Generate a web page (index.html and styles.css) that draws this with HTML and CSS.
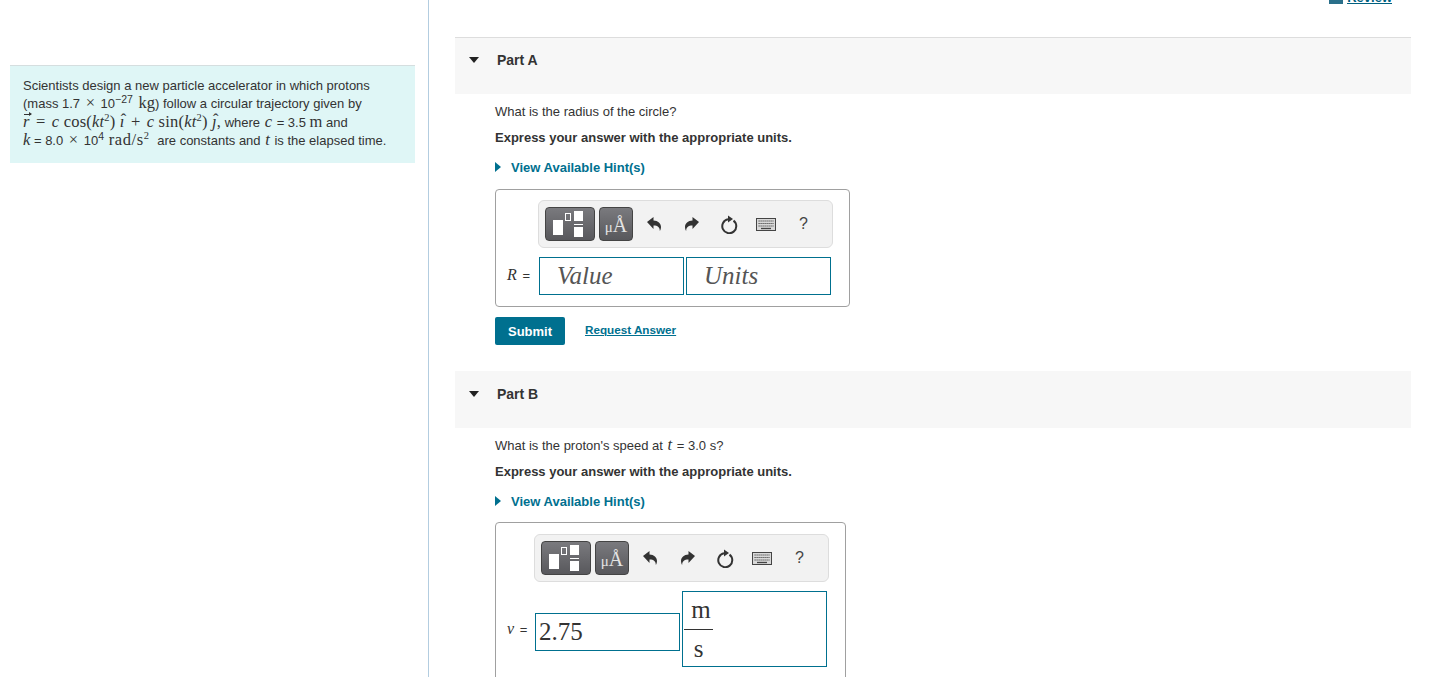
FILE: index.html
```html
<!DOCTYPE html>
<html lang="en">
<head>
    <meta charset="UTF-8" />
    <title>Item</title>
    <link rel="stylesheet" href="styles.css">
</head>
<body>
    <svg class="icon_defs" width="0" height="0">
        <symbol id="undo" viewBox="0 0 16 16"><path d="M1 6 7.500 1v3.500c4.500 0 7.500 3 7.500 6.500 0 1.500-.5 3-1.200 4 .2-3.500-2-5.500-6.300-5.500V13z"/></symbol>
        <symbol id="reset" viewBox="0 0 18 20"><path d="M8 5.300A7 7 0 1 0 13.500 6.600" fill="none" stroke="#333" stroke-width="2"/><path d="M8 1.500v7l5-3.500z"/></symbol>
        <symbol id="keyboard" viewBox="0 0 20 13"><rect x=".5" y=".5" width="19" height="12" fill="#d8d8d8" stroke="#444"/><path d="M2.500 3h15M2.500 5.500h15M2.500 8h15" stroke="#444" stroke-width="1.200" stroke-dasharray="1.200 .8"/><path d="M5 10.500h10" stroke="#444" stroke-width="1.300"/></symbol>
    </svg>

    <aside class="side">
        <div class="intro">
            <p>Scientists design a new particle accelerator in which protons</p>
            <p>(mass 1.7 <span class="times">×</span> 10<sup class="sup_big">−27</sup> <span class="m kg">kg</span>) follow a circular trajectory given by</p>
            <p><span class="m eq"><i class="vec">r</i> <span class="rel">=</span> <i>c</i> cos(<i>kt</i><sup>2</sup>) <i class="hat">ı</i> <span class="rel">+</span> <i>c</i> sin(<i>kt</i><sup>2</sup>) <i class="hat">ȷ</i>,</span> where <i class="m tight">c</i> = 3.5 <span class="m">m</span> and</p>
            <p><i class="m">k</i> = 8.0 <span class="times">×</span> 10<sup class="sup_big">4</sup> <span class="m rad">rad/s<sup>2</sup></span> are constants and <i class="m tight">t</i> is the elapsed time.</p>
        </div>
    </aside>

    <main class="content">
        <div class="review_row">
            <a href="#" class="review_link"><span class="review_icon"></span><span class="review_text">Review</span></a>
        </div>

        <section class="part">
            <div class="part_head"><span class="caret"></span><h3>Part A</h3></div>
            <div class="part_body">
                <p class="question">What is the radius of the circle?</p>
                <p class="express">Express your answer with the appropriate units.</p>
                <a href="#" class="hint"><span class="hint_arrow"></span>View Available Hint(s)</a>

                <div class="answer_box">
                    <div class="toolbar">
                        <button class="tool_btn tool_frac"><span class="b_sq"></span><span class="s_sq"></span><span class="frac"><span></span><span></span></span></button>
                        <button class="tool_btn tool_unit"><span class="mu">μ</span>Å</button>
                        <svg class="ic ic_undo"><use href="#undo"/></svg>
                        <svg class="ic ic_redo"><use href="#undo"/></svg>
                        <svg class="ic ic_reset"><use href="#reset"/></svg>
                        <svg class="ic ic_kb"><use href="#keyboard"/></svg>
                        <span class="ic_help">?</span>
                    </div>
                    <div class="input_row">
                        <span class="var"><i>R</i> =</span>
                        <div class="field placeholder">Value</div>
                        <div class="field placeholder">Units</div>
                    </div>
                </div>

                <div class="actions">
                    <button class="submit">Submit</button>
                    <a href="#" class="request">Request Answer</a>
                </div>
            </div>
        </section>

        <section class="part part_b">
            <div class="part_head"><span class="caret"></span><h3>Part B</h3></div>
            <div class="part_body">
                <p class="question">What is the proton's speed at <i class="m tight">t</i> = 3.0 s?</p>
                <p class="express">Express your answer with the appropriate units.</p>
                <a href="#" class="hint"><span class="hint_arrow"></span>View Available Hint(s)</a>

                <div class="answer_box box_b">
                    <div class="toolbar">
                        <button class="tool_btn tool_frac"><span class="b_sq"></span><span class="s_sq"></span><span class="frac"><span></span><span></span></span></button>
                        <button class="tool_btn tool_unit"><span class="mu">μ</span>Å</button>
                        <svg class="ic ic_undo"><use href="#undo"/></svg>
                        <svg class="ic ic_redo"><use href="#undo"/></svg>
                        <svg class="ic ic_reset"><use href="#reset"/></svg>
                        <svg class="ic ic_kb"><use href="#keyboard"/></svg>
                        <span class="ic_help">?</span>
                    </div>
                    <div class="input_row">
                        <span class="var"><i>v</i> =</span>
                        <div class="field filled">2.75</div>
                        <div class="field units_frac">
                            <div class="fraction"><span class="num">m</span><span class="den">s</span></div>
                        </div>
                    </div>
                </div>
            </div>
        </section>
    </main>
</body>
</html>
```

FILE: styles.css
```css
/* Resetting default styling */
* {
    margin: 0;
    padding: 0;
    box-sizing: border-box;
    font-family: "Liberation Sans", Arial, sans-serif;
}

html, body {
    height: 677px;
    overflow: hidden;
}

body {
    display: flex;
    background: #ffffff;
    color: #333333;
    font-size: 13px;
}

.icon_defs {
    position: absolute;
}

/* Left column */
.side {
    width: 429px;
    flex: none;
    padding: 65px 13px 0 10px;
    border-right: 1px solid #b3cde0;
}

.intro {
    height: 98px;
    padding: 11px 13px 0;
    background: #dff6f6;
    border-top: 1px solid #d5dedf;
    white-space: nowrap;
}

.intro p {
    height: 18.300px;
    line-height: 18.300px;
}

/* Math text */
.m, .m i, .m span, .m sup, .var i, .part i, .times {
    font-family: "Liberation Serif", serif;
}

.m {
    font-size: 16.500px;
    line-height: 0;
}

.eq {
    letter-spacing: .2px;
}

.rad {
    letter-spacing: .6px;
    margin: 0 4px 0 1px;
}

.rel {
    margin: 0 2px;
}

.times {
    font-size: 16.500px;
    line-height: 0;
    margin: 0 2px;
}

.tight {
    margin: 0 1px;
}

sup {
    font-size: 10.500px;
    line-height: 0;
}

.kg {
    margin-left: 2px;
}

.vec, .hat {
    position: relative;
}

.vec::before {
    content: '';
    position: absolute;
    left: 1px;
    top: 2px;
    width: 7px;
    height: 1px;
    background: #333333;
}

.vec::after {
    content: '';
    position: absolute;
    left: 6px;
    top: 0;
    border-left: 3px solid #333333;
    border-top: 2.500px solid transparent;
    border-bottom: 2.500px solid transparent;
}

.hat::before {
    content: 'ˆ';
    position: absolute;
    left: 1px;
    top: 0;
    font-style: normal;
    line-height: 16px;
}

/* Right column */
.content {
    width: 956px;
    flex: none;
    margin-left: 26px;
}

.review_row {
    height: 37px;
    margin-top: -8px;
    margin-bottom: 8px;
    padding-right: 19px;
    text-align: right;
}

.review_link {
    display: inline-flex;
    align-items: flex-end;
    gap: 4px;
    height: 11px;
    color: #00607f;
    font-size: 13px;
    font-weight: bold;
}

.review_icon {
    width: 14px;
    height: 5px;
    background: #2a6f8a;
}

.review_text {
    line-height: 11px;
    border-bottom: 1px solid #00607f;
}

.part_b {
    margin-top: 26px;
}

.part_head {
    height: 57px;
    display: flex;
    padding: 15px 0 0 14px;
    background: #f7f7f7;
}

.part:first-of-type .part_head {
    padding-top: 14px;
    border-top: 1px solid #dddddd;
}

.part_head h3 {
    font-size: 14px;
    line-height: 16px;
    margin-left: 18px;
    color: #333333;
}

.caret {
    width: 0;
    height: 0;
    margin-top: 5px;
    border-left: 5.500px solid transparent;
    border-right: 5.500px solid transparent;
    border-top: 6px solid #222222;
}

.part_body {
    padding: 10px 0 0 40px;
}

.question {
    line-height: 16px;
}

.express {
    margin-top: 10px;
    line-height: 16px;
    font-weight: bold;
}

.hint {
    display: flex;
    align-items: center;
    margin-top: 13px;
    height: 16px;
    color: #00708f;
    font-weight: bold;
    text-decoration: none;
}

.hint_arrow {
    width: 0;
    height: 0;
    margin-right: 10px;
    border-top: 5px solid transparent;
    border-bottom: 5px solid transparent;
    border-left: 6px solid #00708f;
}

/* Answer box */
.answer_box {
    width: 355px;
    height: 118px;
    margin-top: 14px;
    padding: 10px 16px 0 11px;
    border: 1px solid #a0a0a0;
    border-radius: 4px;
}

.box_b {
    width: 351px;
    height: 170px;
    margin-top: 13px;
    padding-top: 11px;
}

.toolbar {
    width: 295px;
    height: 48px;
    margin-left: 31px;
    display: flex;
    align-items: center;
    padding-left: 6px;
    gap: 4px;
    background: #f2f2f2;
    border: 1px solid #dddddd;
    border-radius: 6px;
}

.box_b .toolbar {
    margin-left: 27px;
}

.tool_btn {
    height: 34px;
    border: 1px solid #444444;
    border-radius: 4px;
    background: linear-gradient(#7a7a7e, #58585c);
    flex: none;
}

.tool_frac {
    position: relative;
    width: 50px;
}

.b_sq {
    position: absolute;
    left: 7px;
    top: 12px;
    width: 10px;
    height: 15px;
    background: #ffffff;
}

.s_sq {
    position: absolute;
    left: 19px;
    top: 5px;
    width: 6px;
    height: 8px;
    border: 1px solid #ffffff;
}

.frac {
    position: absolute;
    left: 28px;
    top: 3px;
    width: 9px;
    height: 26px;
    display: flex;
    flex-direction: column;
    justify-content: space-between;
}

.frac span {
    height: 10px;
    background: #ffffff;
}

.frac::after {
    content: '';
    position: absolute;
    top: 12.500px;
    left: 0;
    width: 100%;
    height: 1px;
    background: #ffffff;
}

.tool_unit {
    width: 34px;
    padding-top: 3px;
    font-family: "Liberation Serif", serif;
    font-size: 20px;
    line-height: 28px;
    color: #e4e4e4;
}

.mu {
    font-family: "Liberation Serif", serif;
    font-size: 15px;
}

.ic {
    flex: none;
    fill: #333333;
}

.ic_undo, .ic_redo {
    width: 16px;
    height: 16px;
}

.ic_undo {
    margin-left: 9px;
}

.ic_redo {
    margin-left: 18px;
    transform: scaleX(-1);
}

.ic_reset {
    width: 18px;
    height: 20px;
    margin-left: 16px;
}

.ic_kb {
    width: 20px;
    height: 13px;
    margin-left: 14px;
}

.ic_help {
    margin-left: 19px;
    font-size: 16px;
    color: #444444;
}

.input_row {
    display: flex;
    align-items: center;
    margin-top: 9px;
}

.var {
    width: 32px;
    flex: none;
    padding-bottom: 2px;
    font-size: 13px;
    color: #333333;
}

.box_b .var {
    width: 28px;
    padding-bottom: 0;
}

.var i {
    font-size: 16px;
    margin-right: 2px;
}

.field {
    width: 145px;
    height: 38px;
    flex: none;
    border: 1px solid #00708f;
    font-family: "Liberation Serif", serif;
    font-size: 25px;
    line-height: 36px;
}

.field + .field {
    margin-left: 2px;
}

.placeholder {
    padding-left: 17px;
    font-style: italic;
    color: #555555;
}

.filled {
    margin-top: 6px;
    padding-left: 3px;
    color: #333333;
}

.units_frac {
    height: 76px;
    padding-left: 1px;
}

.fraction {
    width: 29px;
    display: flex;
    flex-direction: column;
    align-items: center;
    color: #333333;
}

.num, .den {
    font-family: "Liberation Serif", serif;
}

.num {
    height: 38px;
    line-height: 36px;
    width: 100%;
    padding-left: 5px;
    text-align: center;
    border-bottom: 1px solid #333333;
}

.den {
    line-height: 38px;
}

/* Submit row */
.actions {
    display: flex;
    align-items: center;
    gap: 20px;
    margin-top: 10px;
}

.submit {
    width: 70px;
    height: 28px;
    border: none;
    border-radius: 2px;
    background: #00708f;
    color: #ffffff;
    font-size: 13px;
    font-weight: bold;
}

.request {
    margin-top: -4px;
    color: #00708f;
    font-size: 11.700px;
    font-weight: bold;
}
```
